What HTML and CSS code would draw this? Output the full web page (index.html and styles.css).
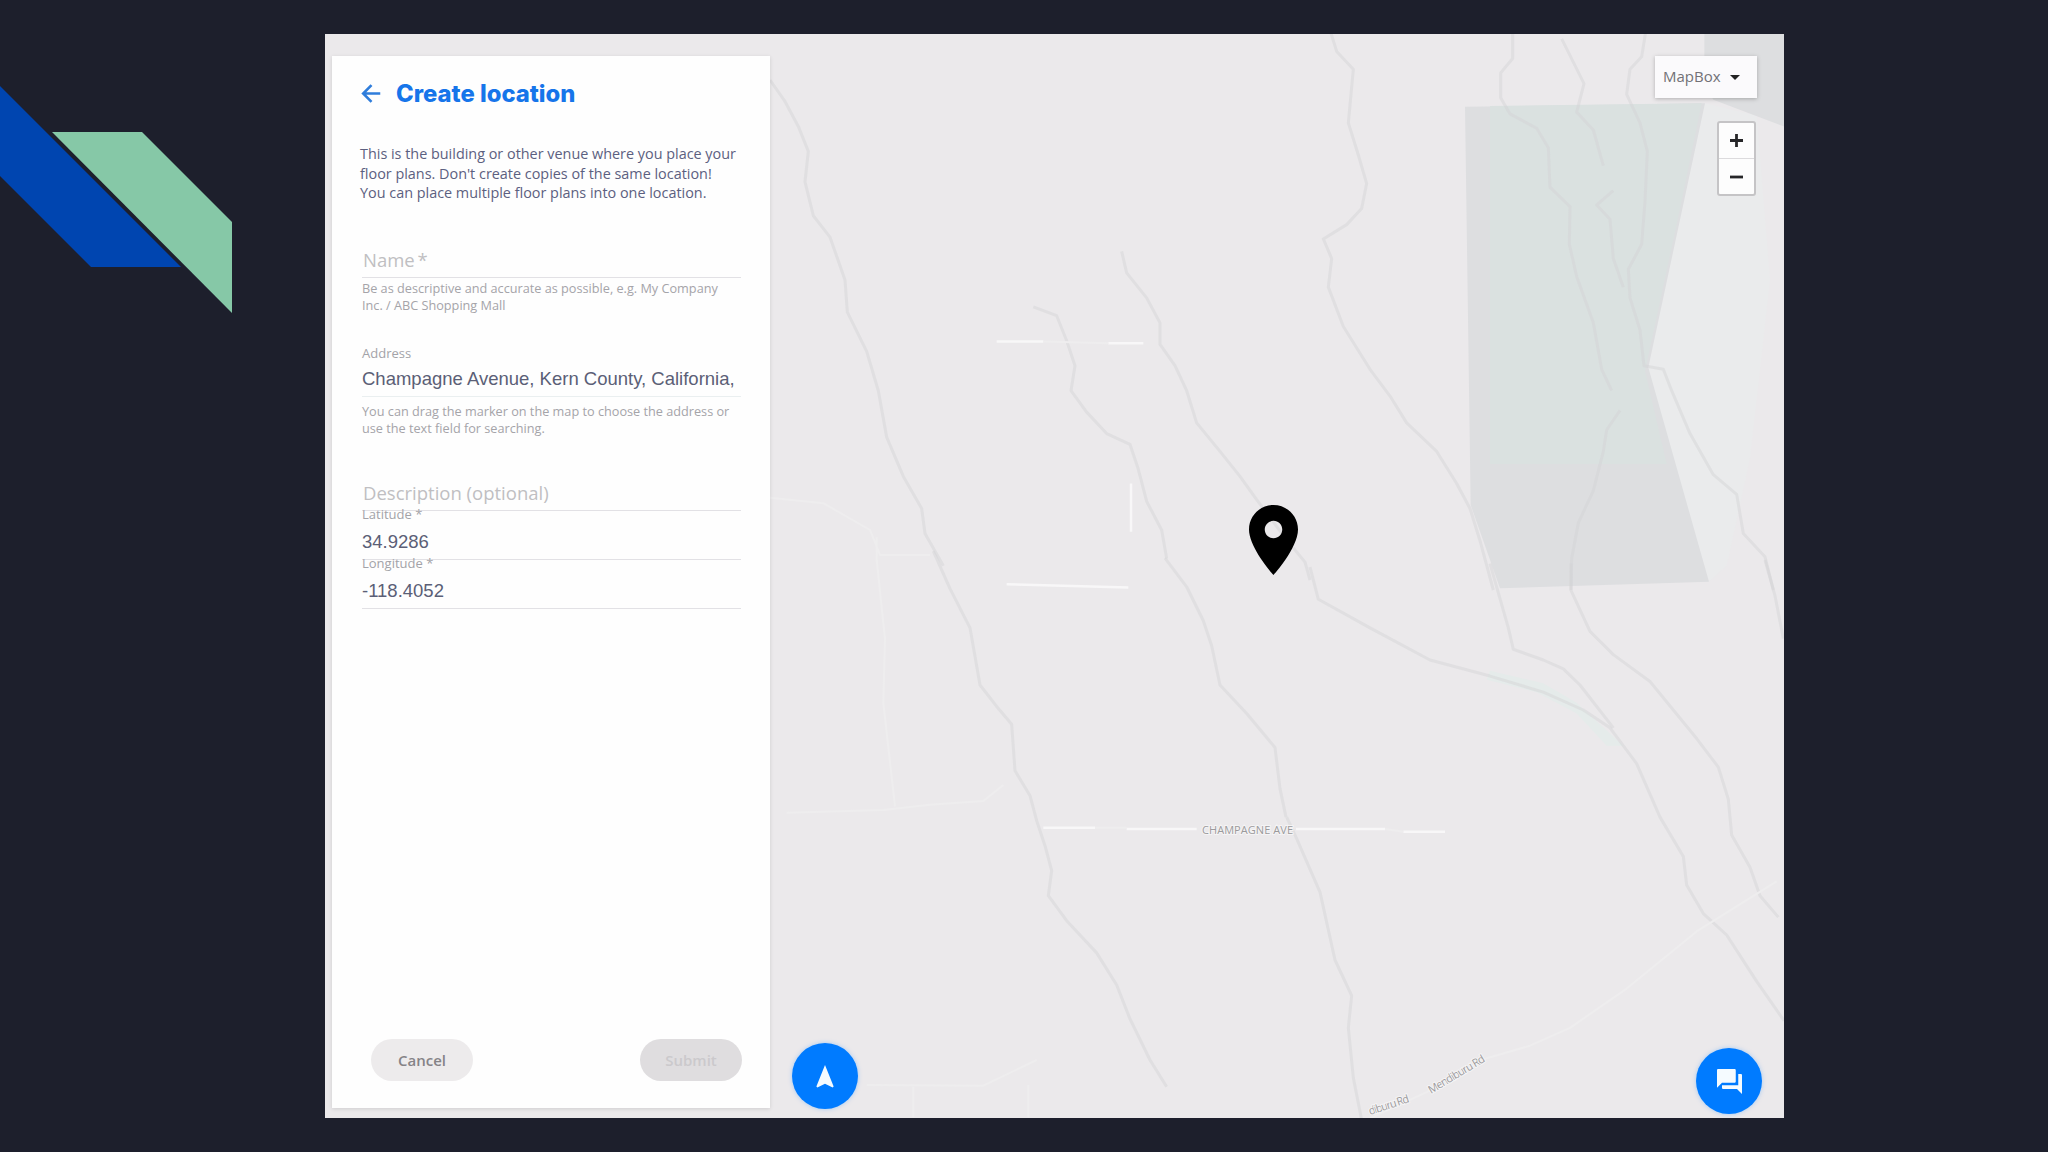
FILE: index.html
```html
<!DOCTYPE html>
<html lang="en">
<head>
    <meta charset="UTF-8">
    <meta name="viewport" content="width=device-width, initial-scale=1.0">
    <title>Create location</title>
    <link rel="stylesheet" href="styles.css">
</head>
<body>
    <svg class="ribbon" viewBox="0 0 240 320">
        <polygon fill="#0045b0" points="0,86 0,176 91,267 181,267"/>
        <polygon fill="#86c8a7" points="52,132 142,132 232,222 232,313"/>
    </svg>

    <div class="app">
        <svg class="map" viewBox="325 34 1459 1084">
            <rect class="land" x="325" y="34" width="1459" height="1084"/>
            <!-- map tiles: north west, north east, south west, south east -->
            <g transform="translate(1290 30) scale(.33333 .35714)">
                <path class="park-light" d="M1245 205L1400 240L1440 700L1380 1200L1310 1500L1257 1545L1065 955Z"/>
                <path class="park" d="M525 215L1245 205L1075 945L1257 1545L630 1563L542 1330Z"/>
                <path class="park-core" d="M600 213L1235 205L1170 500L1065 955L1130 1215H600Z"/>
                <path class="park" d="M1243 0H1482V270L1270 195L1243 150Z"/>
                <path class="stream" d="M120 0L140 60L190 110L175 260L205 350L230 430L215 500L170 545L100 585L125 640L115 720L160 830L240 950L300 1025L350 1100L440 1180L500 1270L540 1340L570 1430L610 1568"/>
                <path class="stream" d="M668 0V80L632 120V190L660 235L740 275L775 330L780 440L840 495L838 600L860 690L910 820L935 950L965 1010"/>
                <path class="stream" d="M990 1065L950 1120L940 1180L910 1290L865 1380L845 1480L843 1568"/>
                <path class="stream" d="M815 25L850 90L882 150L860 230L910 280L940 380"/>
                <path class="stream" d="M1068 0L1055 75L1020 110L1010 180L1050 260L1072 340L1065 480L1055 600L1015 670L1020 750L1050 840L1062 940L1120 950L1145 1010L1200 1130L1270 1245L1340 1300L1360 1410L1425 1475L1450 1568"/>
                <path class="stream" d="M970 450L920 490L960 530L970 640L1000 720"/>
                <path class="stream" d="M10 1450L45 1490L60 1540"/>
            </g>
            <g transform="translate(770 30) scale(.33333 .35714)">
                <path class="stream" d="M0 140L45 200L85 270L115 340L105 425L130 520L180 580L225 700L232 790L290 900L325 1010L350 1140L400 1250L455 1340L465 1410L520 1500"/>
                <path class="stream" d="M790 775L860 800L890 870L915 940L903 1010L950 1070L1010 1130L1080 1160L1105 1230L1130 1320L1175 1400L1190 1480"/>
                <path class="stream" d="M1055 620L1070 680L1130 750L1170 820L1170 880L1215 940L1250 1010L1280 1100L1350 1180L1410 1250L1460 1315L1560 1440"/>
                <path class="road" d="M680 872L820 872M1015 877L1120 877M1083 1270V1405"/>
                <path class="road faint" d="M820 872L1015 877M0 1310L160 1325L300 1400L330 1470L480 1470M320 1420V1490"/>
            </g>
            <g transform="translate(770 560) scale(.33333 .35714)">
                <path class="stream" d="M490 -25L540 80L600 190L630 350L680 410L725 460L735 590L780 660L800 730L825 800L845 870L835 940L890 1010L980 1100L1040 1190L1080 1285L1140 1400L1190 1475"/>
                <path class="stream" d="M1185 -5L1250 75L1300 170L1325 240L1350 350L1430 430L1515 525L1530 640L1548 720"/>
                <path class="road" d="M710 68L1075 77M820 750L975 750M1070 753L1280 753"/>
                <path class="road faint" d="M50 708L340 700L480 685L640 675L700 630M320 0L345 220L340 400L375 690M290 1470L640 1472L800 1400M430 1475V1560M775 1470V1560M975 750H1070"/>
            </g>
            <g transform="translate(1290 560) scale(.33333 .35714)">
                <path class="wash" d="M600 310L760 345L860 400L1000 520L950 520L860 430L740 370L590 335Z"/>
                <path class="stream" d="M60 20L85 110L240 190L420 280L600 325L760 370L880 420L960 470L1040 570L1110 720L1180 830L1190 910L1240 990L1310 1050L1400 1180L1482 1290"/>
                <path class="stream" d="M600 10L655 190L670 250L760 280L820 305L870 350L970 470"/>
                <path class="stream" d="M843 10V85L900 200L970 265L1080 340L1150 420L1220 500L1285 580L1315 670L1325 770L1380 860L1410 940L1465 1000"/>
                <path class="stream" d="M1425 0L1455 100L1480 220"/>
                <path class="stream" d="M-10 720L20 780L90 930L135 1120L185 1220L175 1310L190 1450L215 1568"/>
                <path class="road" d="M18 753H285M340 761H465"/>
                <path class="road faint" d="M285 753L340 761M230 1568L410 1490L590 1395L720 1360L840 1310L1010 1200L1220 1040L1460 900"/>
            </g>
            <text class="street" x="1202" y="834" textLength="91">CHAMPAGNE AVE</text>
            <text class="road-name" transform="translate(1431 1094) rotate(-31)" textLength="64">Mendiburu Rd</text>
            <text class="road-name" transform="translate(1370 1115) rotate(-18)" textLength="42">diburu Rd</text>
        </svg>

        <div class="panel">
            <div class="panel-header">
                <svg class="back" viewBox="0 0 24 24">
                    <path d="M22 12H3M12 2.5L2.5 12L12 21.5"/>
                </svg>
                <h1>Create location</h1>
            </div>
            <p class="intro">
                This is the building or other venue where you place your<br>
                floor plans. Don't create copies of the same location!<br>
                You can place multiple floor plans into one location.
            </p>

            <div class="field name">
                <div class="input placeholder">Name *</div>
                <div class="hint">Be as descriptive and accurate as possible, e.g. My Company<br>Inc. / ABC Shopping Mall</div>
            </div>
            <div class="field address">
                <div class="label">Address</div>
                <div class="input light">Champagne Avenue, Kern County, California,</div>
                <div class="hint">You can drag the marker on the map to choose the address or<br>use the text field for searching.</div>
            </div>
            <div class="field description">
                <div class="input placeholder">Description (optional)</div>
            </div>
            <div class="field tight">
                <div class="label">Latitude *</div>
                <div class="input">34.9286</div>
            </div>
            <div class="field tight">
                <div class="label">Longitude *</div>
                <div class="input">-118.4052</div>
            </div>

            <div class="actions">
                <button class="btn">Cancel</button>
                <button class="btn" disabled>Submit</button>
            </div>
        </div>

        <div class="layer-select">MapBox <span class="caret"></span></div>
        <div class="zoom">
            <svg viewBox="0 0 14 14"><path d="M7 0V14M0 7H14"/></svg>
            <svg viewBox="0 0 14 14"><path d="M0 7H14"/></svg>
        </div>
        <svg class="pin" viewBox="5 2 14 20" preserveAspectRatio="none">
            <path d="M12 2C8.13 2 5 5.13 5 9c0 5.25 7 13 7 13s7-7.75 7-13c0-3.87-3.13-7-7-7zm0 9.5c-1.38 0-2.5-1.12-2.5-2.5s1.12-2.5 2.5-2.5 2.5 1.12 2.5 2.5-1.12 2.5-2.5 2.5z"/>
        </svg>
        <div class="fab locate">
            <svg viewBox="0 0 18 24"><path d="M9 0L18 22.5L17 23.5L9 19.5L1 23.5L0 22.5Z"/></svg>
        </div>
        <div class="fab chat">
            <svg viewBox="2 2 20 20"><path d="M21 6h-2v9H6v2c0 .55.45 1 1 1h11l4 4V7c0-.55-.45-1-1-1zm-4 6V3c0-.55-.45-1-1-1H3c-.55 0-1 .45-1 1v14l4-4h10c.55 0 1-.45 1-1z"/></svg>
        </div>
    </div>
</body>
</html>
```
FILE: styles.css
```css
* {
    box-sizing: border-box;
}

body {
    margin: 0;
    width: 2048px;
    height: 1152px;
    padding: 34px 264px 34px 325px;
    background-color: #1d1f2c;
    font-family: "Open Sans", sans-serif;
    overflow: hidden;
}

.ribbon {
    position: absolute;
    left: 0;
    top: 0;
    width: 240px;
    height: 320px;
}

.app {
    position: relative;
    width: 1459px;
    height: 1084px;
    padding: 22px 7px 10px;
    overflow: hidden;
}

/* Map */
.map {
    position: absolute;
    left: 0;
    top: 0;
    width: 100%;
    height: 100%;
}

.land {
    fill: #ebe9eb;
}

.park {
    fill: #dddee0;
}

.park-core {
    fill: #dae1e0;
}

.park-light {
    fill: #eaebec;
}

.wash {
    fill: #e5ebea;
}

.stream,
.road {
    fill: none;
    vector-effect: non-scaling-stroke;
    stroke-linejoin: round;
}

.stream {
    stroke: #d2d3d5;
    stroke-opacity: 0.45;
    stroke-width: 3;
}

.road {
    stroke: #f8f7f8;
    stroke-width: 2.5;
}

.road.faint {
    stroke: #eeedee;
    stroke-width: 2;
}

.street,
.road-name {
    fill: #9b9a9c;
    font-size: 11px;
    stroke: #f5f4f5;
    stroke-width: 2;
    paint-order: stroke;
}

/* Side panel */
.panel {
    position: relative;
    display: flex;
    flex-direction: column;
    width: 438px;
    height: 1052px;
    padding: 22px 29px 27px 28px;
    background-color: #fefefe;
    box-shadow: 0 1px 4px rgba(0, 0, 0, 0.12);
}

.panel-header {
    display: flex;
    align-items: center;
    gap: 14px;
    height: 30px;
    padding-left: 1px;
}

.back {
    width: 21px;
    height: 21px;
    fill: none;
    stroke: #2f7ddb;
    stroke-width: 3;
}

h1 {
    margin: 0;
    font-family: Inter, sans-serif;
    font-size: 23.8px;
    font-weight: 800;
    color: #1675ea;
    white-space: nowrap;
}

.intro {
    margin: 36px 0 0;
    font-size: 14.4px;
    line-height: 19.6px;
    color: #5c6080;
    white-space: nowrap;
}

.field {
    width: 379px;
    margin-left: 2px;
}

.name {
    margin-top: 45px;
}

.address {
    margin-top: 31px;
}

.description {
    margin-top: 44px;
}

.label {
    height: 16px;
    font-size: 13px;
    line-height: 16px;
    color: #a3a3a8;
}

.input {
    height: 30px;
    border-bottom: 1px solid #e2e1e5;
    font-family: "Liberation Sans", sans-serif;
    font-size: 18.5px;
    line-height: 24px;
    color: #5b5f76;
    white-space: nowrap;
}

.label + .input {
    margin-top: 6px;
}

.input.light {
    border-color: #eaeff0;
}

.placeholder {
    padding-left: 1px;
    font-family: "Open Sans", sans-serif;
    color: #c0bfc2;
}

.name .placeholder {
    word-spacing: -2px;
}

.hint {
    padding-top: 2px;
    font-size: 12.7px;
    line-height: 17px;
    color: #a5a4a9;
    white-space: nowrap;
}

.address .hint {
    padding-top: 6px;
}

.tight {
    margin-top: -5px;
}

.tight .input {
    margin-top: 8px;
}

.actions {
    display: flex;
    justify-content: space-between;
    margin-top: auto;
    margin-right: -1px;
    padding-left: 11px;
}

.btn {
    width: 102px;
    height: 42px;
    border: none;
    border-radius: 21px;
    background-color: #edebec;
    font-family: "Open Sans", sans-serif;
    font-size: 15px;
    font-weight: 600;
    color: #858387;
}

.btn:disabled {
    background-color: #dfdddf;
    color: #cbc9cc;
}

/* Map controls */
.layer-select {
    position: absolute;
    left: 1330px;
    top: 22px;
    display: flex;
    align-items: center;
    gap: 9px;
    width: 102px;
    height: 42px;
    padding: 0 0 2px 8px;
    background-color: #fbfafc;
    box-shadow: 0 1px 4px rgba(0, 0, 0, 0.25);
    font-size: 15px;
    color: #727176;
}

.caret {
    margin-top: 3px;
    border: 5px solid transparent;
    border-top-color: #222;
    border-bottom: none;
}

.zoom {
    position: absolute;
    left: 1392px;
    top: 87px;
    width: 39px;
    height: 75px;
    border: 2px solid #c5c4c6;
    border-radius: 3px;
    background-color: #fdfdfd;
}

.zoom svg {
    display: block;
    width: 100%;
    height: 36px;
    padding: 11px;
    stroke: #262628;
    stroke-width: 3;
}

.zoom svg:first-child {
    border-bottom: 1px solid #dcdbdd;
}

.pin {
    position: absolute;
    left: 924px;
    top: 471px;
    width: 49px;
    height: 70px;
}

.fab {
    position: absolute;
    display: flex;
    align-items: center;
    justify-content: center;
    width: 66px;
    height: 66px;
    border-radius: 50%;
    background-color: #007bff;
    box-shadow: 0 0 4px rgba(90, 170, 255, 0.5);
}

.fab svg {
    fill: #f5fbff;
}

.locate {
    left: 467px;
    top: 1009px;
}

.locate svg {
    width: 18px;
    height: 23px;
}

.chat {
    left: 1371px;
    top: 1014px;
}

.chat svg {
    width: 25px;
    height: 25px;
}
```
